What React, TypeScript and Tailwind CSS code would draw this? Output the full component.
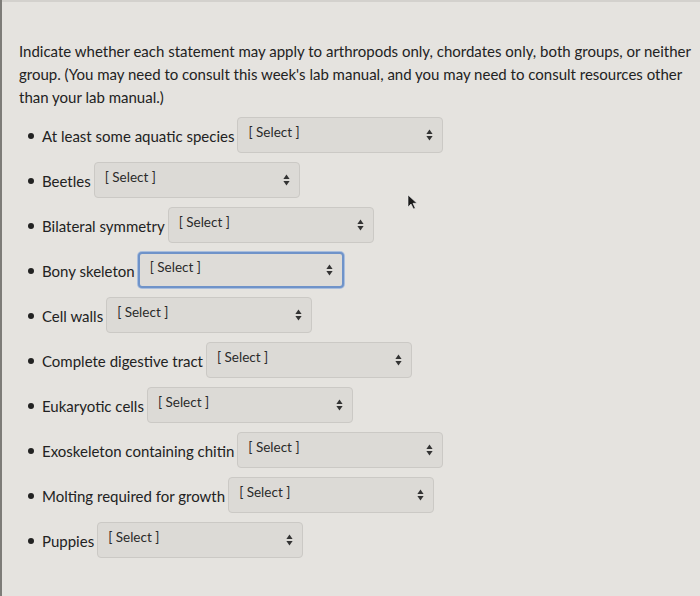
import React from "react";

const items = [
  "At least some aquatic species",
  "Beetles",
  "Bilateral symmetry",
  "Bony skeleton",
  "Cell walls",
  "Complete digestive tract",
  "Eukaryotic cells",
  "Exoskeleton containing chitin",
  "Molting required for growth",
  "Puppies",
];

function Arrows() {
  return (
    <svg width="7" height="12" viewBox="0 0 7 12" className="shrink-0">
      <path d="M3.5 0.5 L6.6 5 H0.4 Z" fill="#333" />
      <path d="M3.5 11.5 L6.6 7 H0.4 Z" fill="#333" />
    </svg>
  );
}

function FakeSelect({ focused }: { focused?: boolean }) {
  return (
    <div
      className={
        "flex h-[36px] w-[206px] shrink-0 items-center justify-between rounded-[4px] pl-[10px] pr-[9px] " +
        (focused
          ? "border-2 border-[#6f93c9] bg-[#dedcd8] shadow-[0_0_0_1px_#a9bedd]"
          : "border border-[#cbc9c5] bg-[#dcdad6]")
      }
    >
      <span className="-mt-[6px] text-[13.5px] text-[#2a2a2a]">[ Select ]</span>
      <Arrows />
    </div>
  );
}

export default function App() {
  return (
    <div
      className="relative h-[596px] w-[700px] overflow-hidden border-l-2 border-l-[#7d7c78] bg-[#e5e3df] text-[#222]"
      style={{ fontFamily: "Lato, 'Open Sans', sans-serif" }}
    >
      <div className="h-[2px] w-full bg-[#d3d1cd]" />
      <div className="pl-[17px] pr-[6px] pt-[38px]">
        <p className="text-[15px] leading-[23px]">
          Indicate whether each statement may apply to arthropods only, chordates only, both groups, or neither
          group. (You may need to consult this week's lab manual, and you may need to consult resources other
          than your lab manual.)
        </p>
        <ul className="mt-[8px] flex flex-col gap-[9px] pl-[9px]">
          {items.map((label, i) => (
            <li key={label} className="flex items-center">
              <span className="mr-[8px] mt-[2px] h-[6px] w-[6px] rounded-full bg-[#222]" />
              <span className="mr-[3px] mt-[3px] text-[15px]">{label}</span>
              <FakeSelect focused={i === 3} />
            </li>
          ))}
        </ul>
      </div>
      <svg
        className="absolute left-[405px] top-[194px]"
        width="12"
        height="16"
        viewBox="0 0 12 16"
      >
        <path d="M1 1 L1 13 L4 10 L6.5 15 L8.3 14.2 L6 9.3 L10 9.3 Z" fill="#1b1b1b" stroke="#f2f2f2" strokeWidth="0.6" />
      </svg>
    </div>
  );
}
